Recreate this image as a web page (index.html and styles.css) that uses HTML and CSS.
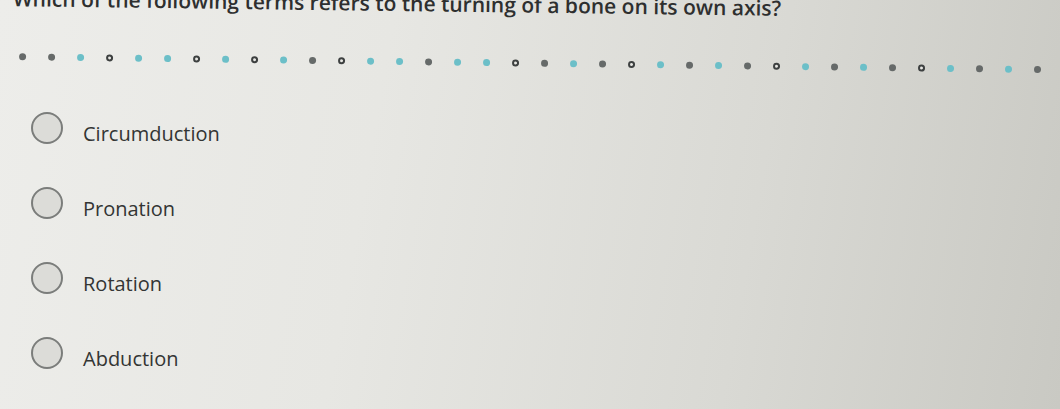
FILE: index.html
```html
<!DOCTYPE html>
<html lang="en">
<head>
    <meta charset="UTF-8">
    <title>Quiz</title>
    <link rel="stylesheet" href="styles.css">
</head>
<body>
<div class="quiz">
    <div class="quiz-head">
        <h2 class="question">Which of the following terms refers to the turning of a bone on its own axis?</h2>
        <div class="progress">
            <span class="dot done"></span>
            <span class="dot done"></span>
            <span class="dot ok"></span>
            <span class="dot now"></span>
            <span class="dot ok"></span>
            <span class="dot ok"></span>
            <span class="dot now"></span>
            <span class="dot ok"></span>
            <span class="dot now"></span>
            <span class="dot ok"></span>
            <span class="dot done"></span>
            <span class="dot now"></span>
            <span class="dot ok"></span>
            <span class="dot ok"></span>
            <span class="dot done"></span>
            <span class="dot ok"></span>
            <span class="dot ok"></span>
            <span class="dot now"></span>
            <span class="dot done"></span>
            <span class="dot ok"></span>
            <span class="dot done"></span>
            <span class="dot now"></span>
            <span class="dot ok"></span>
            <span class="dot done"></span>
            <span class="dot ok"></span>
            <span class="dot done"></span>
            <span class="dot now"></span>
            <span class="dot ok"></span>
            <span class="dot done"></span>
            <span class="dot ok"></span>
            <span class="dot done"></span>
            <span class="dot now"></span>
            <span class="dot ok"></span>
            <span class="dot done"></span>
            <span class="dot ok"></span>
            <span class="dot done"></span>
        </div>
    </div>
    <ul class="answers">
        <li class="answer"><span class="radio"></span><span class="label">Circumduction</span></li>
        <li class="answer"><span class="radio"></span><span class="label">Pronation</span></li>
        <li class="answer"><span class="radio"></span><span class="label">Rotation</span></li>
        <li class="answer"><span class="radio"></span><span class="label">Abduction</span></li>
    </ul>
</div>
</body>
</html>
```

FILE: styles.css
```css
*{
    font-family: 'Open Sans', 'Noto Sans', sans-serif;
    box-sizing: border-box;
}
html, body{
    height: 100%;
}
body{
    margin: 0;
    overflow: hidden;
    background: linear-gradient(100deg, #ededea 0%, #e7e7e3 35%, #d9d9d4 70%, #c9c9c3 100%);
}
.quiz-head{
    transform: rotate(0.72deg);
    transform-origin: 0 0;
}
.question{
    margin: -15px 0 0 13px;
    font-size: 21px;
    font-weight: 600;
    line-height: 26px;
    color: #2e2f2f;
    white-space: nowrap;
}
/* progress dots */
.progress{
    display: flex;
    align-items: center;
    gap: 22px;
    margin: 41px 0 0 20px;
    height: 8px;
}
.dot{
    width: 7px;
    height: 7px;
    border-radius: 50%;
    flex: none;
}
.dot.done{
    background: #666a69;
}
.dot.ok{
    background: #6cbfc8;
}
.dot.now{
    border: 2px solid #3d4040;
    background: #e8e8e4;
}
/* answers */
.answers{
    list-style: none;
    margin: 52px 0 0 31px;
    padding: 0;
    display: flex;
    flex-direction: column;
    gap: 43px;
}
.answer{
    display: flex;
    align-items: center;
    gap: 20px;
    height: 32px;
    font-size: 20px;
    color: #333534;
}
.label{
    padding-top: 10px;
}
.radio{
    width: 32px;
    height: 32px;
    border-radius: 50%;
    border: 2px solid #7b7d7b;
    background: #dcdcd8;
    flex: none;
}
```
